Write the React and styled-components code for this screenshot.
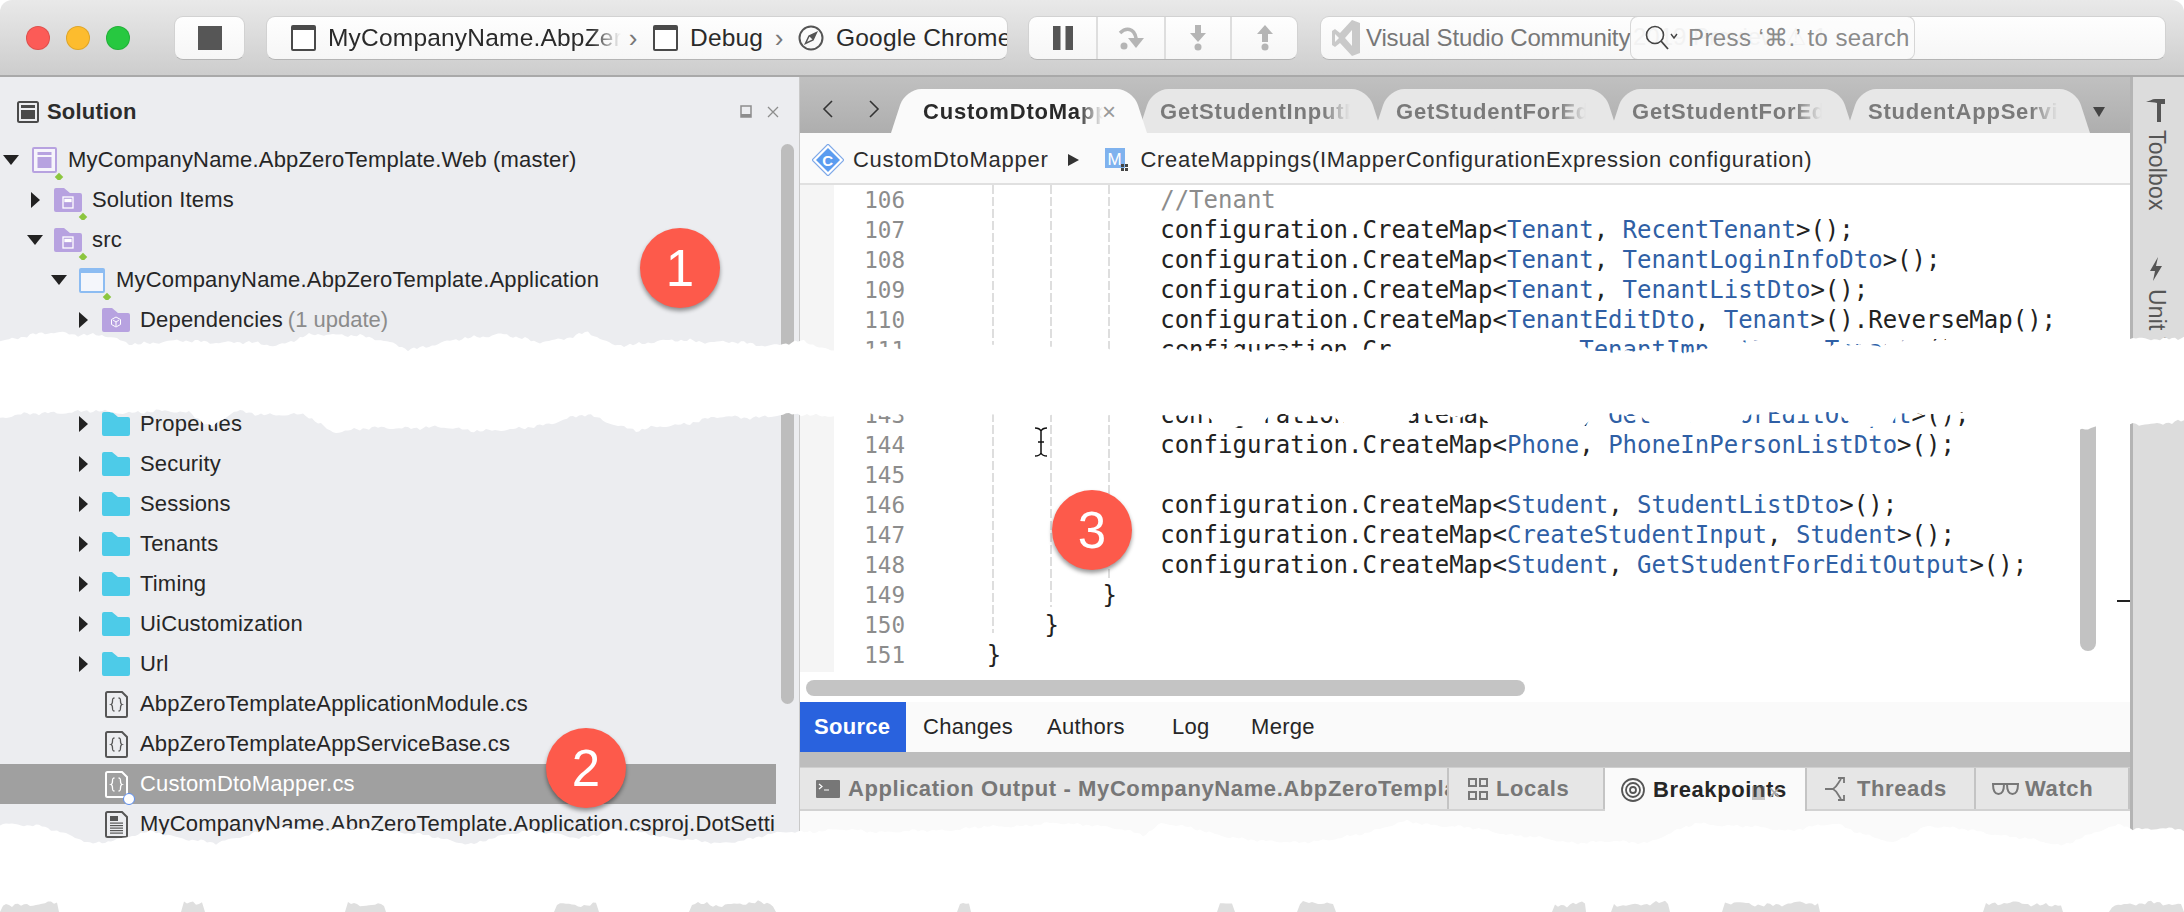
import React from "react";
import styled, { createGlobalStyle } from "styled-components";

const UI = `"Liberation Sans", Arial, sans-serif`;
const MONO = `"DejaVu Sans Mono", "Liberation Mono", monospace`;

const GlobalStyle = createGlobalStyle`
  html, body { margin: 0; padding: 0; background: #fff; }
  body { font-family: ${UI}; overflow: hidden; }
`;

const Page = styled.div`
  position: relative;
  width: 2184px;
  height: 912px;
  overflow: hidden;
  display: flex;
  flex-direction: column;
  border-radius: 12px 12px 0 0;
`;

/* ---------- title bar ---------- */
const TitleBar = styled.div`
  flex: none;
  display: flex;
  align-items: flex-start;
  height: 59px;
  padding: 16px 18px 0 26px;
  background: linear-gradient(#e9e9e9, #cdcdcd);
  border-bottom: 2px solid #a9a9a9;
`;
const Lights = styled.div`
  display: flex;
  gap: 16px;
  margin-top: 10px;
  margin-right: 44px;
`;
const Light = styled.span`
  width: 24px;
  height: 24px;
  border-radius: 50%;
  background: ${p => p.$color};
  box-shadow: inset 0 0 0 1px rgba(0, 0, 0, 0.12);
`;
const ToolBox = styled.div`
  position: relative;
  height: 44px;
  box-sizing: border-box;
  flex: none;
  width: ${p => p.$w}px;
  margin-right: ${p => p.$mr || 0}px;
  display: flex;
  align-items: center;
  overflow: hidden;
  background: linear-gradient(#fefefe, #f6f6f6);
  border: 1px solid #d2d2d2;
  border-bottom-color: #b4b4b4;
  border-radius: 9px;
  font-size: 24.5px;
  color: #2a2a2a;
`;
const StopSquare = styled.span`
  width: 24px;
  height: 24px;
  margin-left: 23px;
  background: #565656;
`;
const SchemeIcon = styled.span`
  flex: none;
  width: 25px;
  height: 26px;
  box-sizing: border-box;
  margin: 0 12px 0 ${p => p.$ml}px;
  border: 2px solid #4a4a4a;
  border-top-width: 5px;
  border-radius: 2px;
  background: #fff;
`;
const SchemeText = styled.span`
  flex: none;
  width: ${p => p.$w}px;
  white-space: nowrap;
  overflow: hidden;
  letter-spacing: 0.2px;
  ${p => p.$fade && "mask-image: linear-gradient(to right, #000 90%, transparent 100%);"}
`;
const Sep = styled.span`
  flex: none;
  width: ${p => p.$w}px;
  color: #777;
  font-size: 26px;
  text-align: center;
`;
const CompassSlot = styled.span`
  flex: none;
  display: flex;
  margin: 0 12px 0 5px;
`;
const DebugCell = styled.div`
  flex: none;
  width: ${p => p.$w}px;
  height: 100%;
  display: flex;
  align-items: center;
  justify-content: center;
  border-right: ${p => (p.$last ? "none" : "2px solid #dedede")};
  box-sizing: border-box;
`;
const LogoSlot = styled.span`
  flex: none;
  display: flex;
  margin-left: 11px;
`;
const StatusText = styled.span`
  margin-left: 6px;
  font-size: 24px;
  letter-spacing: -0.15px;
  white-space: nowrap;
  color: #777;
`;
const StatusGhost = styled.div`
  position: absolute;
  left: 312px;
  top: 6px;
  font-size: 24px;
  color: #e7e7e7;
  white-space: nowrap;
`;
const SearchBox = styled.div`
  position: absolute;
  left: 309px;
  top: -1px;
  width: 285px;
  height: 44px;
  box-sizing: border-box;
  display: flex;
  align-items: center;
  padding-left: 14px;
  border: 1px solid rgba(190, 190, 190, 0.6);
  border-radius: 8px;
  background: rgba(252, 252, 252, 0.55);
  font-size: 24px;
  color: #8a8a8a;
  white-space: nowrap;
`;
const SearchText = styled.span`
  margin-left: 9px;
  letter-spacing: 0.4px;
`;

/* ---------- body ---------- */
const Body = styled.div`
  flex: 1;
  display: flex;
  min-height: 0;
`;
const LeftPane = styled.div`
  position: relative;
  flex: none;
  width: 800px;
  background: #ecedf0;
  border-right: 1px solid #c9c9c9;
  box-sizing: border-box;
`;
const PaneHead = styled.div`
  height: 63px;
  display: flex;
  align-items: center;
  padding: 7px 19px 0 17px;
  box-sizing: border-box;
  color: #2c2c2c;
  font-size: 22px;
  font-weight: 700;
  letter-spacing: 0.2px;
`;
const PaneTitle = styled.span`
  margin-left: 8px;
  flex: 1;
`;
const PaneScroll = styled.div`
  position: absolute;
  top: 67px;
  left: 781px;
  width: 13px;
  height: 560px;
  border-radius: 7px;
  background: #bdbdbd;
`;
const Tree = styled.div`
  width: 776px;
  margin-bottom: ${p => p.$gap || 0}px;
`;
const Row = styled.div`
  position: relative;
  height: 40px;
  display: flex;
  align-items: center;
  padding-left: ${p => p.$level * 24}px;
  background: ${p => (p.$selected ? "#a0a0a0" : "transparent")};
  color: ${p => (p.$selected ? "#fff" : "#262626")};
  font-size: 22px;
  letter-spacing: 0.18px;
  white-space: nowrap;
  overflow: ${p => (p.$selected ? "visible" : "hidden")};
`;
const CaretSlot = styled.span`
  flex: none;
  width: 22px;
  display: flex;
  justify-content: center;
`;
const Caret = styled.span`
  width: 0;
  height: 0;
  ${p =>
    p.$open
      ? "border-left: 8px solid transparent; border-right: 8px solid transparent; border-top: 10px solid #222;"
      : "border-top: 8px solid transparent; border-bottom: 8px solid transparent; border-left: 9px solid #222;"}
`;
const IconSlot = styled.span`
  position: relative;
  flex: none;
  width: 46px;
  height: 40px;
  display: flex;
  align-items: center;
  padding-left: ${p => p.$pad}px;
  box-sizing: border-box;
`;
const Diamond = styled.span`
  position: absolute;
  left: 34px;
  top: 34px;
  width: 6px;
  height: 6px;
  background: #8cc63f;
  transform: rotate(45deg);
`;
const Muted = styled.span`
  margin-left: 5px;
  color: #8b8b8b;
  letter-spacing: 0;
`;
const MoreDot = styled.span`
  position: absolute;
  left: ${p => p.$left}px;
  top: 29px;
  width: 10px;
  height: 10px;
  border-radius: 50%;
  background: #fff;
  border: 1px solid #5b8def;
`;

/* ---------- editor ---------- */
const Editor = styled.div`
  flex: none;
  width: 1330px;
  display: flex;
  flex-direction: column;
  background: #fafafa;
`;
const TabBar = styled.div`
  position: relative;
  flex: none;
  height: 56px;
  padding-top: 12px;
  box-sizing: border-box;
  display: flex;
  background: linear-gradient(#c0c0c0, #aeaeae);
`;
const NavSlot = styled.div`
  flex: none;
  width: ${p => p.$w}px;
  height: 40px;
  display: flex;
  align-items: center;
  justify-content: center;
`;
const Tab = styled.div`
  position: relative;
  flex: none;
  width: ${p => (p.$active ? 255 : 244)}px;
  margin-left: ${p => (p.$active ? 0 : -8)}px;
  height: 44px;
  z-index: ${p => (p.$active ? 2 : 1)};
  display: flex;
  align-items: center;
  padding: 2px 0 0 ${p => (p.$active ? 32 : 22)}px;
  box-sizing: border-box;
  font-size: 22px;
  font-weight: 700;
  letter-spacing: 0.8px;
  color: ${p => (p.$active ? "#2a2a2a" : "#7a7a7a")};
  &::before,
  &::after {
    content: "";
    position: absolute;
    top: 0;
    bottom: 0;
    background: ${p => (p.$active ? "#fafafa" : "#e7e7e7")};
  }
  &::before {
    left: 0;
    right: 50%;
    border-top-left-radius: 16px;
    transform-origin: bottom left;
    transform: skewX(-18deg);
  }
  &::after {
    left: 50%;
    right: 0;
    border-top-right-radius: 16px;
    transform-origin: bottom right;
    transform: skewX(18deg);
  }
`;
const TabLabel = styled.span`
  position: relative;
  z-index: 1;
  width: ${p => p.$w}px;
  overflow: hidden;
  white-space: nowrap;
  mask-image: linear-gradient(to right, #000 86%, transparent 100%);
`;
const TabClose = styled.span`
  position: relative;
  z-index: 1;
  margin-left: -1px;
  color: #999;
  font-weight: 400;
  font-size: 24px;
  letter-spacing: 0;
`;
const TabMenu = styled.span`
  position: absolute;
  left: 1293px;
  top: 30px;
  width: 0;
  height: 0;
  border-left: 6px solid transparent;
  border-right: 6px solid transparent;
  border-top: 10px solid #444;
`;
const PathBar = styled.div`
  flex: none;
  height: 52px;
  box-sizing: border-box;
  display: flex;
  align-items: center;
  padding: 3px 0 0 12px;
  background: #fafafa;
  border-bottom: 2px solid #e0e0e0;
  font-size: 22px;
  letter-spacing: 0.72px;
  color: #2c2c2c;
  white-space: nowrap;
`;
const PathName = styled.span`
  margin-left: ${p => p.$ml}px;
`;
const PathArrow = styled.span`
  margin-left: 20px;
  margin-right: 26px;
  width: 0;
  height: 0;
  border-top: 6px solid transparent;
  border-bottom: 6px solid transparent;
  border-left: 11px solid #333;
`;
const CodeArea = styled.div`
  position: relative;
  flex: none;
  height: 517px;
  overflow: hidden;
  background: linear-gradient(to right, #f5f5f5 34px, #fff 34px) no-repeat top left / 100% 487px, #fff;
`;
const Guide = styled.span`
  position: absolute;
  left: ${p => p.$left}px;
  top: 0;
  height: ${p => p.$h}px;
  width: 2px;
  background: repeating-linear-gradient(#dedede 0 9px, transparent 9px 12px);
`;
const CodeChunk = styled.div`
  position: relative;
  margin-bottom: ${p => p.$gap || 0}px;
`;
const CodeLine = styled.div`
  display: flex;
  height: 30px;
  line-height: 30px;
  font-family: ${MONO};
  font-size: 24px;
  white-space: pre;
  color: #222;
`;
const LineNo = styled.span`
  flex: none;
  width: 105px;
  margin-right: 24px;
  text-align: right;
  color: #8c8c8c;
  font-size: 22.6px;
`;
const TypeName = styled.span`
  color: #2f5fa5;
`;
const Comment = styled.span`
  color: #8c8c8c;
`;
const IBeam = styled.svg`
  position: absolute;
  left: 234px;
  top: 242px;
`;
const VScroll = styled.div`
  position: absolute;
  left: 1280px;
  top: 195px;
  width: 16px;
  height: 271px;
  border-radius: 8px;
  background: #c2c2c2;
`;
const HScroll = styled.div`
  position: absolute;
  left: 6px;
  top: 495px;
  width: 719px;
  height: 16px;
  border-radius: 8px;
  background: #c4c4c4;
`;
const MapTick = styled.div`
  position: absolute;
  left: 1317px;
  top: 415px;
  width: 13px;
  height: 2px;
  background: #222;
`;
const SourceBar = styled.div`
  flex: none;
  height: 50px;
  display: flex;
  align-items: center;
  background: #fafafa;
  font-size: 22px;
  letter-spacing: 0.3px;
  color: #262626;
`;
const SourceTab = styled.span`
  height: 100%;
  width: ${p => p.$w}px;
  display: flex;
  align-items: center;
  box-sizing: border-box;
  padding-left: ${p => p.$pad}px;
  background: ${p => (p.$active ? "#2962de" : "transparent")};
  color: ${p => (p.$active ? "#fff" : "inherit")};
  font-weight: ${p => (p.$active ? 700 : 400)};
`;
const Splitter = styled.div`
  flex: none;
  height: 15px;
  background: #bdbdbd;
`;
const PadBar = styled.div`
  flex: none;
  height: 44px;
  display: flex;
  background: #e6e6e6;
  border-top: 1px solid #cfcfcf;
  border-bottom: 2px solid #d2d2d2;
  box-sizing: border-box;
  font-size: 22px;
  font-weight: 700;
  letter-spacing: 0.6px;
  color: #777;
  white-space: nowrap;
`;
const PadTab = styled.div`
  position: relative;
  flex: none;
  width: ${p => p.$w}px;
  height: ${p => (p.$active ? 43 : 41)}px;
  display: flex;
  align-items: center;
  gap: ${p => p.$gap || 8}px;
  padding-left: ${p => p.$pad}px;
  box-sizing: border-box;
  overflow: hidden;
  border-right: 2px solid #c4c4c4;
  background: ${p => (p.$active ? "#fafafa" : "transparent")};
  color: ${p => (p.$active ? "#262626" : "inherit")};
  svg {
    flex: none;
  }
`;
const PadControls = styled.span`
  position: absolute;
  left: 147px;
  top: 12px;
  display: flex;
  align-items: center;
  gap: 3px;
  color: #aaa;
  font-weight: 400;
`;
const PadSquare = styled.span`
  width: 13px;
  height: 14px;
  background: rgba(120, 120, 120, 0.4);
`;

/* ---------- right rail ---------- */
const Rail = styled.div`
  flex: 1;
  display: flex;
  flex-direction: column;
  align-items: center;
  padding: 21px 5px 0 0;
  background: #dcdcdc;
  border-left: 3px solid #b4b4b4;
  color: #555;
  font-size: 23px;
`;
const RailText = styled.span`
  writing-mode: vertical-rl;
  white-space: nowrap;
  margin-top: 8px;
  letter-spacing: 0.2px;
`;
const BoltSlot = styled.span`
  display: flex;
  margin-top: 46px;
`;

/* ---------- callouts and tears ---------- */
const Callout = styled.div`
  position: absolute;
  left: ${p => p.$x - 40}px;
  top: ${p => p.$y - 40}px;
  width: 80px;
  height: 80px;
  border-radius: 50%;
  display: flex;
  align-items: center;
  justify-content: center;
  background: #fd5a4b;
  color: #fff;
  font-size: 51px;
  box-shadow: 0 3px 4px rgba(0, 0, 0, 0.4);
`;
const TearLayer = styled.svg`
  position: absolute;
  left: 0;
  top: 0;
`;

/* ---------- small drawings ---------- */
const Folder = ({ color, glyph }) => (
  <svg width="28" height="24" viewBox="0 0 28 24">
    <path d="M2 0h8l6 5h10a2 2 0 0 1 2 2v15a2 2 0 0 1-2 2H2a2 2 0 0 1-2-2V2a2 2 0 0 1 2-2z" fill={color} />
    {glyph === "box" && <g fill="none" stroke="#fff" strokeWidth="1.3"><rect x="9" y="9" width="10" height="11" /><rect x="11" y="11.500" width="6" height="2" fill="#fff" /></g>}
    {glyph === "dep" && <path d="M14 9l4.500 2.500v5L14 19l-4.500-2.500v-5zM11 12l3 2 3-2M14 14v4" fill="none" stroke="#fff" strokeWidth="1" />}
  </svg>
);
const SolutionIcon = () => (
  <svg width="25" height="26" viewBox="0 0 25 26">
    <rect x="1" y="1" width="23" height="24" rx="1" fill="#f6f4fb" stroke="#b7a2e0" strokeWidth="2" />
    <rect x="5.500" y="5" width="14" height="3" fill="#b7a2e0" />
    <rect x="5.500" y="10" width="14" height="11" fill="#b7a2e0" />
  </svg>
);
const ProjectIcon = () => (
  <svg width="26" height="25" viewBox="0 0 26 25">
    <rect x="1" y="1" width="24" height="23" rx="1" fill="#f4f6fb" stroke="#8cbcf2" strokeWidth="2" />
    <rect x="1" y="1" width="24" height="4" fill="#8cbcf2" />
  </svg>
);
const FileIcon = ({ color = "#565656", lines }) => (
  <svg width="23" height="27" viewBox="0 0 23 27">
    <path d="M2.500 1H17l5 5v18.500a1.500 1.500 0 0 1-1.500 1.500h-18A1.500 1.500 0 0 1 1 24.500V2.500A1.500 1.500 0 0 1 2.500 1z" fill="none" stroke={color} strokeWidth="2" />
    {lines ? (
      <g fill={color}>
        <rect x="5" y="5" width="8" height="5" />
        <rect x="5" y="11.500" width="13" height="1.200" />
        <rect x="5" y="14" width="13" height="1.200" />
        <rect x="5" y="16.500" width="13" height="1.200" />
        <rect x="5" y="19" width="13" height="1.200" />
        <rect x="5" y="21.500" width="13" height="1.200" />
      </g>
    ) : (
      <path d="M9.500 7c-2 0-2 1-2 3s0 3-1.500 3.500c1.500.5 1.500 1.500 1.500 3.500s0 3 2 3M13.500 7c2 0 2 1 2 3s0 3 1.500 3.500c-1.500.5-1.500 1.500-1.500 3.500s0 3-2 3" fill="none" stroke={color} strokeWidth="1.300" />
    )}
  </svg>
);
const SolutionPadIcon = () => (
  <svg width="22" height="22" viewBox="0 0 22 22">
    <rect x="1" y="1" width="20" height="20" rx="1.500" fill="none" stroke="#4a4a4a" strokeWidth="2" />
    <rect x="4" y="4" width="14" height="3" fill="#4a4a4a" />
    <rect x="4" y="9" width="14" height="9" fill="#4a4a4a" />
  </svg>
);
const PinIcon = () => (
  <svg width="40" height="14" viewBox="0 0 40 14">
    <rect x="1" y="1" width="10" height="11" fill="#ecedf0" stroke="#8d8d8d" strokeWidth="1.500" />
    <rect x="1" y="9" width="10" height="3" fill="#8d8d8d" />
    <path d="M28 2l10 10M38 2L28 12" stroke="#8d8d8d" strokeWidth="1.300" />
  </svg>
);
const Chevron = ({ left }) => (
  <svg width="12" height="18" viewBox="0 0 12 18">
    <path d={left ? "M10 1L2 9l8 8" : "M2 1l8 8-8 8"} fill="none" stroke="#333" strokeWidth="1.600" />
  </svg>
);
const Compass = () => (
  <svg width="26" height="26" viewBox="0 0 26 26">
    <circle cx="13" cy="13" r="11.500" fill="none" stroke="#555" strokeWidth="2" />
    <path d="M18.500 7.500l-3.500 7.500-7.500 3.500 3.500-7.500z" fill="none" stroke="#555" strokeWidth="1.500" />
    <path d="M18.500 7.500L15 15l-4-4z" fill="#555" />
  </svg>
);
const PauseIcon = () => (
  <svg width="20" height="24" viewBox="0 0 20 24">
    <rect width="7.500" height="24" fill="#555" />
    <rect x="12.500" width="7.500" height="24" fill="#555" />
  </svg>
);
const StepOver = () => (
  <svg width="28" height="28" viewBox="0 0 28 28">
    <path d="M3 9c6-6 14-5 16 5v3" fill="none" stroke="#b5b5b5" strokeWidth="3.500" />
    <path d="M11 14h16l-8 10z" fill="#b5b5b5" />
    <circle cx="7" cy="22" r="3.500" fill="#b5b5b5" />
  </svg>
);
const StepVert = ({ up }) => (
  <svg width="18" height="26" viewBox="0 0 18 26">
    {up ? (
      <path d="M9 0l8 9h-5v8H6V9H1z" fill="#b5b5b5" />
    ) : (
      <path d="M6 0h6v8h5l-8 9-8-9h5z" fill="#b5b5b5" />
    )}
    <circle cx="9" cy="22" r="3.500" fill="#b5b5b5" />
  </svg>
);
const VsLogo = () => (
  <svg width="28" height="36" viewBox="0 0 28 36">
    <path d="M20 0l8 3v30l-8 3-12-13-5 4-3-2V11l3-2 5 4zM20 10l-7 8 7 8zM3 14v8l4-4z" fill="#c9c9c9" fillRule="evenodd" />
  </svg>
);
const SearchIcon = () => (
  <svg width="34" height="26" viewBox="0 0 34 26">
    <circle cx="10" cy="10" r="8.500" fill="none" stroke="#444" strokeWidth="1.600" />
    <path d="M16 16l7 8" stroke="#444" strokeWidth="1.800" />
    <path d="M26 9l3 4 3-4" fill="none" stroke="#444" strokeWidth="1.400" />
  </svg>
);
const ClassIcon = () => (
  <svg width="32" height="32" viewBox="0 0 32 32">
    <path d="M16 0l16 16-16 16L0 16z" fill="#fff" stroke="#7fa9e8" strokeWidth="1.200" />
    <path d="M16 4l12 12-12 12L4 16z" fill="#5a9cf0" />
    <text x="16" y="21.500" textAnchor="middle" fontFamily={UI} fontWeight="700" fontSize="15" fill="#fff">C</text>
  </svg>
);
const MethodIcon = () => (
  <svg width="24" height="24" viewBox="0 0 24 24">
    <rect width="20" height="20" fill="#7fb2ee" />
    <text x="10" y="16.500" textAnchor="middle" fontFamily={UI} fontSize="17" fill="#fff">M</text>
    <g fill="#444">
      <rect x="16" y="16" width="3" height="3" />
      <rect x="20" y="16" width="3" height="3" />
      <rect x="16" y="20" width="3" height="3" />
      <rect x="20" y="20" width="3" height="3" />
    </g>
  </svg>
);
const TerminalIcon = () => (
  <svg width="24" height="18" viewBox="0 0 24 18">
    <rect width="24" height="18" rx="1" fill="#777" />
    <path d="M3 4l3 2.500L3 9M8 10h5" fill="none" stroke="#fff" strokeWidth="1.200" />
  </svg>
);
const LocalsIcon = () => (
  <svg width="20" height="24" viewBox="0 0 20 24">
    <g fill="none" stroke="#777" strokeWidth="2">
      <rect x="1" y="2" width="7" height="7" />
      <rect x="12" y="2" width="7" height="7" />
      <rect x="1" y="15" width="7" height="7" />
      <rect x="12" y="15" width="7" height="7" />
    </g>
  </svg>
);
const TargetIcon = () => (
  <svg width="24" height="24" viewBox="0 0 24 24">
    <g fill="none" stroke="#555" strokeWidth="1.800">
      <circle cx="12" cy="12" r="11" />
      <circle cx="12" cy="12" r="7" />
      <circle cx="12" cy="12" r="3" />
    </g>
  </svg>
);
const ThreadIcon = () => (
  <svg width="24" height="26" viewBox="0 0 24 26">
    <path d="M0 13h8M8 13c4-2 5-6 8-10M8 13c4 2 5 6 8 10M13 2h6v5M13 24h6v-5" fill="none" stroke="#777" strokeWidth="1.800" />
  </svg>
);
const GlassesIcon = () => (
  <svg width="27" height="14" viewBox="0 0 27 14">
    <path d="M1 2h11c0 6-2 10-5.500 10S1 8 1 2zM15 2h11c0 6-2 10-5.500 10S15 8 15 2zM12 2h3" fill="none" stroke="#777" strokeWidth="2" />
  </svg>
);
const HammerIcon = () => (
  <svg width="20" height="24" viewBox="0 0 20 24">
    <path d="M0 4c4-1 6-3 9-3h10v5h-4v18h-4V5c-3-1-6-1-11-1z" fill="#555" />
  </svg>
);
const BoltIcon = () => (
  <svg width="14" height="24" viewBox="0 0 14 24">
    <path d="M9 0L1 14h5l-2 10 9-15H7z" fill="#555" />
  </svg>
);

/* ---------- data ---------- */
const TOP_ROWS = [
  { level: 0, open: true, icon: <SolutionIcon />, pad: 10, dot: true, label: "MyCompanyName.AbpZeroTemplate.Web (master)" },
  { level: 1, caret: true, icon: <Folder color="#b7a2e0" glyph="box" />, pad: 8, dot: true, label: "Solution Items" },
  { level: 1, open: true, icon: <Folder color="#b7a2e0" glyph="box" />, pad: 8, dot: true, label: "src" },
  { level: 2, open: true, icon: <ProjectIcon />, pad: 9, dot: true, label: "MyCompanyName.AbpZeroTemplate.Application" },
  { level: 3, caret: true, icon: <Folder color="#b7a2e0" glyph="dep" />, pad: 8, label: "Dependencies", note: "(1 update)" },
  { level: 3, caret: true, icon: <Folder color="#4dcbe8" />, pad: 8, label: "Net" },
];
const BOTTOM_ROWS = [
  ...["Properties", "Security", "Sessions", "Tenants", "Timing", "UiCustomization", "Url"].map(label => ({
    level: 3,
    caret: true,
    icon: <Folder color="#4dcbe8" />,
    pad: 8,
    label,
  })),
  { level: 3, icon: <FileIcon />, pad: 11, label: "AbpZeroTemplateApplicationModule.cs" },
  { level: 3, icon: <FileIcon />, pad: 11, label: "AbpZeroTemplateAppServiceBase.cs" },
  { level: 3, icon: <FileIcon color="#fff" />, pad: 11, label: "CustomDtoMapper.cs", selected: true },
  { level: 3, icon: <FileIcon lines />, pad: 11, label: "MyCompanyName.AbpZeroTemplate.Application.csproj.DotSettings" },
];
const MAP = "configuration.CreateMap<";
const TOP_CODE = [
  [106, "                ", <Comment key="c">//Tenant</Comment>],
  [107, MAP, "Tenant", ", ", "RecentTenant", ">();"],
  [108, MAP, "Tenant", ", ", "TenantLoginInfoDto", ">();"],
  [109, MAP, "Tenant", ", ", "TenantListDto", ">();"],
  [110, MAP, "TenantEditDto", ", ", "Tenant", ">().ReverseMap();"],
  [111, MAP, "StartTenantImportDto", ", ", "Tenant", ">();"],
];
const BOTTOM_CODE = [
  [143, MAP, "Phone", ", ", "GetPhoneForEditOutput", ">();"],
  [144, MAP, "Phone", ", ", "PhoneInPersonListDto", ">();"],
  [145],
  [146, MAP, "Student", ", ", "StudentListDto", ">();"],
  [147, MAP, "CreateStudentInput", ", ", "Student", ">();"],
  [148, MAP, "Student", ", ", "GetStudentForEditOutput", ">();"],
  [149, "            }"],
  [150, "        }"],
  [151, "    }"],
];

const renderCode = ([no, first, a, sep, b, tail]) => (
  <CodeLine key={no}>
    <LineNo>{no}</LineNo>
    {first === MAP ? (
      <span>
        {"                "}
        {first}
        <TypeName>{a}</TypeName>
        {sep}
        <TypeName>{b}</TypeName>
        {tail}
      </span>
    ) : (
      <span>
        {first}
        {a}
      </span>
    )}
  </CodeLine>
);

const renderRow = r => (
  <Row key={r.label} $level={r.level} $selected={r.selected}>
    <CaretSlot>{(r.caret || r.open) && <Caret $open={r.open} />}</CaretSlot>
    <IconSlot $pad={r.pad}>
      {r.icon}
      {r.dot && <Diamond />}
      {r.selected && <MoreDot $left={29} />}
    </IconSlot>
    {r.label}
    {r.note && <Muted>{r.note}</Muted>}
  </Row>
);

/* ---------- torn paper edges ---------- */
const jag = (x, seed) =>
  Math.sin(x * 0.09 + seed) * 0.45 +
  Math.sin(x * 0.23 + seed * 2.1) * 0.35 +
  Math.sin(x * 0.61 + seed * 3.3) * 0.3 +
  Math.sin(x * 1.37 + seed * 1.7) * 0.25;

const edge = (pts, amp, seed) => {
  const out = [];
  let seg = 0;
  for (let x = 0; x <= 2184; x += 3) {
    while (seg < pts.length - 2 && x > pts[seg + 1][0]) seg++;
    const [x0, y0] = pts[seg];
    const [x1, y1] = pts[seg + 1];
    const t = Math.min(1, (x - x0) / (x1 - x0));
    out.push([x, +(y0 + (y1 - y0) * t + jag(x, seed) * amp).toFixed(1)]);
  }
  return out;
};
const band = (top, bottom) =>
  "M" + top.concat([...bottom].reverse()).map(p => p.join(",")).join("L") + "Z";

const TEAR1_TOP = edge(
  [[0, 340], [60, 332], [102, 336], [128, 343], [204, 341], [276, 345], [306, 336], [357, 334], [408, 349], [459, 340], [500, 333], [536, 343], [587, 333], [612, 345], [689, 340], [765, 345], [800, 342], [830, 350], [1000, 345], [1160, 349], [1389, 350], [1400, 336], [1570, 336], [1590, 351], [1705, 351], [1720, 340], [1815, 340], [1830, 345], [1880, 345], [1900, 340], [2130, 340], [2184, 337]],
  2.5,
  1.3
);
const TEAR1_BOTTOM = edge(
  [[0, 418], [50, 412], [190, 412], [212, 427], [235, 412], [306, 416], [332, 431], [408, 427], [510, 431], [587, 415], [638, 431], [714, 418], [800, 415], [1150, 414], [1205, 416], [1220, 425], [1260, 425], [1270, 415], [1330, 416], [1345, 425], [1405, 425], [1415, 415], [1480, 415], [1490, 425], [1585, 425], [1595, 413], [1640, 417], [1660, 425], [1740, 425], [1750, 414], [1840, 414], [1850, 425], [1890, 425], [1897, 414], [1990, 414], [2000, 422], [2080, 428], [2130, 424], [2184, 422]],
  2.5,
  2.7
);
const TEAR2_TOP = edge(
  [[0, 825], [42, 825], [90, 844], [153, 832], [216, 844], [265, 829], [327, 829], [390, 830], [473, 844], [530, 829], [578, 839], [613, 829], [717, 844], [787, 832], [836, 830], [905, 832], [1044, 824], [1092, 824], [1144, 835], [1162, 822], [1210, 833], [1263, 842], [1330, 841], [1406, 822], [1461, 827], [1565, 842], [1648, 842], [1698, 823], [1788, 830], [1837, 824], [1893, 844], [1927, 825], [1997, 834], [2060, 845], [2122, 824], [2132, 828], [2184, 830]],
  2,
  4.1
);
const CLUSTERS = [
  [0, 59], [181, 205], [345, 386], [554, 599], [689, 776], [957, 971],
  [1217, 1235], [1297, 1336], [1552, 1586], [1611, 1670], [1722, 1820], [1983, 2063], [2109, 2184],
];
const FLOOR = [[0, 912], [2184, 912]];
const clusterPath = ([a, b]) => {
  const pts = [[a, 912]];
  for (let x = a + 3; x < b; x += 3) {
    pts.push([x, +(904 + jag(x, 5.9) * 3).toFixed(1)]);
  }
  pts.push([b, 912]);
  return "M" + pts.map(p => p.join(",")).join("L") + "Z";
};

const Tears = () => (
  <TearLayer width="2184" height="912" viewBox="0 0 2184 912">
    <path d={band(TEAR1_TOP, TEAR1_BOTTOM)} fill="#fff" />
    <path d={band(TEAR2_TOP, FLOOR)} fill="#fff" />
    {CLUSTERS.map(c => (
      <path key={c[0]} d={clusterPath(c)} fill="#dfdfdf" />
    ))}
  </TearLayer>
);

const App = () => (
  <Page>
    <GlobalStyle />
    <TitleBar>
      <Lights>
        <Light $color="#fc5b57" />
        <Light $color="#fdbc2e" />
        <Light $color="#27c840" />
      </Lights>
      <ToolBox $w={71} $mr={21}>
        <StopSquare />
      </ToolBox>
      <ToolBox $w={742} $mr={20}>
        <SchemeIcon $ml={24} />
        <SchemeText $w={293} $fade>MyCompanyName.AbpZeroTemplate</SchemeText>
        <Sep $w={24}>›</Sep>
        <SchemeIcon $ml={8} />
        <SchemeText $w={75}>Debug</SchemeText>
        <Sep $w={28}>›</Sep>
        <CompassSlot>
          <Compass />
        </CompassSlot>
        <SchemeText $w={180}>Google Chrome</SchemeText>
      </ToolBox>
      <ToolBox $w={270} $mr={22}>
        <DebugCell $w={69}><PauseIcon /></DebugCell>
        <DebugCell $w={68}><StepOver /></DebugCell>
        <DebugCell $w={66}><StepVert /></DebugCell>
        <DebugCell $w={66} $last><StepVert up /></DebugCell>
      </ToolBox>
      <ToolBox $w={846}>
        <LogoSlot>
          <VsLogo />
        </LogoSlot>
        <StatusText>Visual Studio Community</StatusText>
        <StatusGhost>2019 Preview ⚠ 1</StatusGhost>
        <SearchBox>
          <SearchIcon />
          <SearchText>Press ‘⌘.’ to search</SearchText>
        </SearchBox>
      </ToolBox>
    </TitleBar>

    <Body>
      <LeftPane>
        <PaneHead>
          <SolutionPadIcon />
          <PaneTitle>Solution</PaneTitle>
          <PinIcon />
        </PaneHead>
        <Tree $gap={24}>{TOP_ROWS.map(renderRow)}</Tree>
        <Tree>{BOTTOM_ROWS.map(renderRow)}</Tree>
        <PaneScroll />
      </LeftPane>

      <Editor>
        <TabBar>
          <NavSlot $w={56}><Chevron left /></NavSlot>
          <NavSlot $w={35}><Chevron /></NavSlot>
          <Tab $active>
            <TabLabel $w={180}>CustomDtoMapper</TabLabel>
            <TabClose>×</TabClose>
          </Tab>
          <Tab><TabLabel $w={190}>GetStudentInputDto</TabLabel></Tab>
          <Tab><TabLabel $w={190}>GetStudentForEditInput</TabLabel></Tab>
          <Tab><TabLabel $w={190}>GetStudentForEditOutput</TabLabel></Tab>
          <Tab><TabLabel $w={190}>StudentAppService</TabLabel></Tab>
          <TabMenu />
        </TabBar>
        <PathBar>
          <ClassIcon />
          <PathName $ml={9}>CustomDtoMapper</PathName>
          <PathArrow />
          <MethodIcon />
          <PathName $ml={11}>CreateMappings(IMapperConfigurationExpression configuration)</PathName>
        </PathBar>
        <CodeArea>
          <Guide $left={192} $h={448} />
          <Guide $left={250} $h={422} />
          <Guide $left={308} $h={395} />
          <CodeChunk $gap={35}>{TOP_CODE.map(renderCode)}</CodeChunk>
          <CodeChunk>{BOTTOM_CODE.map(renderCode)}</CodeChunk>
          <IBeam width="14" height="30" viewBox="0 0 14 30">
            <path d="M1 1c3 0 5 1 6 3 1-2 3-3 6-3M7 4v22M1 29c3 0 5-1 6-3 1 2 3 3 6 3M4 15h6" fill="none" stroke="#111" strokeWidth="1.500" />
          </IBeam>
          <VScroll />
          <MapTick />
          <HScroll />
        </CodeArea>
        <SourceBar>
          <SourceTab $active $w={106} $pad={14}>Source</SourceTab>
          <SourceTab $w={124} $pad={17}>Changes</SourceTab>
          <SourceTab $w={122} $pad={17}>Authors</SourceTab>
          <SourceTab $w={82} $pad={20}>Log</SourceTab>
          <SourceTab $w={100} $pad={17}>Merge</SourceTab>
        </SourceBar>
        <Splitter />
        <PadBar>
          <PadTab $w={649} $pad={16}>
            <TerminalIcon />
            Application Output - MyCompanyName.AbpZeroTemplate.Web
          </PadTab>
          <PadTab $w={156} $pad={19}>
            <LocalsIcon />
            Locals
          </PadTab>
          <PadTab $w={202} $pad={16} $active>
            <TargetIcon />
            Breakpoints
            <PadControls>
              <PadSquare />
              ×
            </PadControls>
          </PadTab>
          <PadTab $w={169} $pad={18}>
            <ThreadIcon />
            Threads
          </PadTab>
          <PadTab $w={154} $pad={16} $gap={6}>
            <GlassesIcon />
            Watch
          </PadTab>
        </PadBar>
      </Editor>

      <Rail>
        <HammerIcon />
        <RailText>Toolbox</RailText>
        <BoltSlot>
          <BoltIcon />
        </BoltSlot>
        <RailText>Unit Tests</RailText>
      </Rail>
    </Body>

    <Tears />
    <Callout $x={680} $y={268}>1</Callout>
    <Callout $x={586} $y={768}>2</Callout>
    <Callout $x={1092} $y={530}>3</Callout>
  </Page>
);

export default App;
